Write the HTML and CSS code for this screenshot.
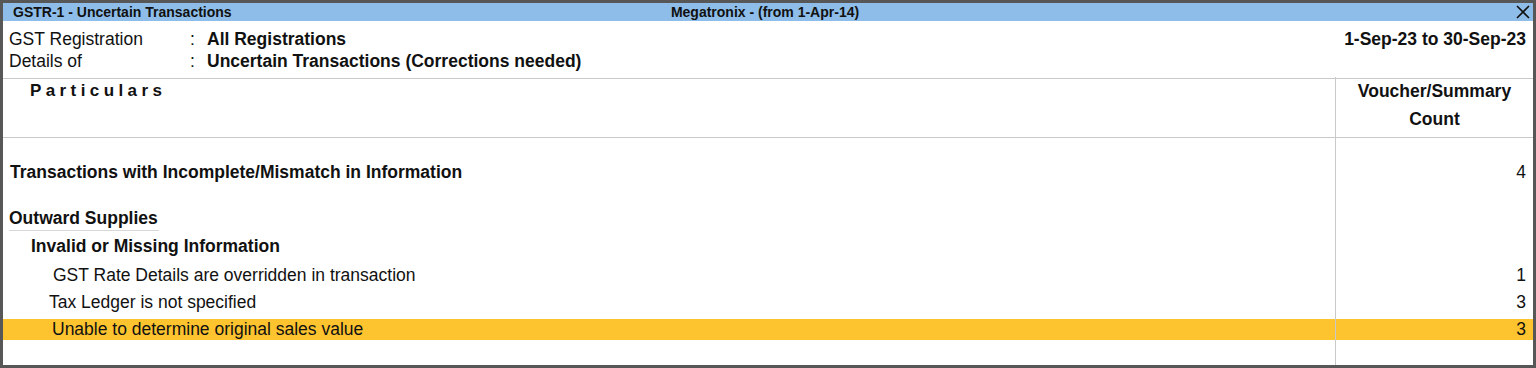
FILE: index.html
```html
<!DOCTYPE html>
<html lang="en">
<head>
  <meta charset="UTF-8">
  <title>GSTR-1 - Uncertain Transactions</title>
  <link rel="stylesheet" href="styles.css">
</head>
<body>

  <div class="window">
    <div class="titlebar">
      <span class="title-left">GSTR-1 - Uncertain Transactions</span>
      <span class="title-center">Megatronix - (from 1-Apr-14)</span>
      <span class="close">
        <svg width="14" height="14" viewBox="0 0 14 14"><path d="M1 1 L13 13 M13 1 L1 13" stroke="#111" stroke-width="1.6" fill="none"/></svg>
      </span>
    </div>

    <div class="info">
      <div class="info-rows">
        <div class="info-row">
          <span class="info-label">GST Registration</span>
          <span class="info-colon">:</span>
          <span class="info-value">All Registrations</span>
        </div>
        <div class="info-row">
          <span class="info-label">Details of</span>
          <span class="info-colon">:</span>
          <span class="info-value">Uncertain Transactions (Corrections needed)</span>
        </div>
      </div>
      <div class="period">1-Sep-23 to 30-Sep-23</div>
    </div>

    <div class="report">
      <div class="row colhead">
        <div class="cell-left"><span class="particulars">Particulars</span></div>
        <div class="cell-right">Voucher/Summary<br>Count</div>
      </div>

      <div class="row spacer"><div class="cell-left"></div><div class="cell-right"></div></div>

      <div class="row r-main">
        <div class="cell-left bold">Transactions with Incomplete/Mismatch in Information</div>
        <div class="cell-right">4</div>
      </div>

      <div class="row spacer"><div class="cell-left"></div><div class="cell-right"></div></div>

      <div class="row r-group">
        <div class="cell-left bold"><span class="underlined">Outward Supplies</span></div>
        <div class="cell-right"></div>
      </div>

      <div class="row r-sub">
        <div class="cell-left bold">Invalid or Missing Information</div>
        <div class="cell-right"></div>
      </div>

      <div class="row r-item1">
        <div class="cell-left">GST Rate Details are overridden in transaction</div>
        <div class="cell-right">1</div>
      </div>

      <div class="row r-item2">
        <div class="cell-left">Tax Ledger is not specified</div>
        <div class="cell-right">3</div>
      </div>

      <div class="row r-gap"><div class="cell-left"></div><div class="cell-right"></div></div>

      <div class="row r-item3 selected">
        <div class="cell-left">Unable to determine original sales value</div>
        <div class="cell-right">3</div>
      </div>

      <div class="row filler"><div class="cell-left"></div><div class="cell-right"></div></div>
    </div>
  </div>

</body>
</html>
```

FILE: styles.css
```css
html, body {
  margin: 0;
  padding: 0;
  height: 100%;
  background: #fff;
}
body {
  font-family: "Liberation Sans", Arial, sans-serif;
  color: #111;
}
.window {
  box-sizing: border-box;
  height: 368px;
  border: 3px solid #575757;
  display: flex;
  flex-direction: column;
}
.titlebar {
  position: relative;
  height: 18px;
  background: #8dbde8;
  display: flex;
  align-items: center;
  font-size: 14px;
  font-weight: bold;
}
.title-left {
  padding-left: 10px;
}
.title-center {
  position: absolute;
  left: 0;
  right: 0;
  text-align: center;
  transform: translateX(-3px);
}
.close {
  position: absolute;
  right: 3px;
  top: 2px;
  height: 14px;
}
.close svg {
  display: block;
}
.info {
  height: 58px;
  box-sizing: border-box;
  padding: 7px 7px 0 6px;
  display: flex;
  justify-content: space-between;
  border-bottom: 1px solid #c9c9c9;
  font-size: 17.5px;
}
.info-row {
  display: flex;
  height: 22px;
  line-height: 22px;
}
.info-label {
  width: 181px;
}
.info-colon {
  width: 17px;
}
.info-value {
  font-weight: bold;
}
.period {
  font-weight: bold;
  line-height: 22px;
}
.report {
  flex: 1;
  display: flex;
  flex-direction: column;
  font-size: 17.5px;
}
.row {
  display: flex;
}
.cell-left {
  flex: 1;
  white-space: nowrap;
}
.cell-right {
  width: 198px;
  border-left: 1px solid #c9c9c9;
  text-align: right;
  padding-right: 7px;
  box-sizing: border-box;
}
.bold {
  font-weight: bold;
}
.colhead {
  height: 58px;
  border-bottom: 1px solid #c9c9c9;
  font-weight: bold;
}
.colhead .cell-left {
  padding: 0 0 0 27px;
  line-height: 22px;
}
.particulars {
  font-size: 17px;
  letter-spacing: 4.4px;
}
.colhead .cell-right {
  text-align: center;
  padding: 0;
  line-height: 28px;
  margin-top: -2px;
}
.spacer {
  height: 20px;
}
.r-main {
  height: 26px;
  line-height: 28px;
}
.r-main .cell-left {
  padding-left: 7px;
}
.r-group {
  height: 27px;
  line-height: 28px;
}
.r-group .cell-left {
  padding-left: 6px;
}
.underlined {
  display: inline-block;
  line-height: 24px;
  padding-right: 1px;
  border-bottom: 1px solid #d8d8d8;
}
.r-sub {
  height: 29px;
  line-height: 30px;
}
.r-sub .cell-left {
  padding-left: 28px;
}
.r-item1 {
  height: 28px;
  line-height: 30px;
}
.r-item1 .cell-left {
  padding-left: 50px;
}
.r-item2 {
  height: 27px;
  line-height: 28px;
}
.r-item2 .cell-left {
  padding-left: 46px;
}
.r-gap {
  height: 4px;
}
.r-item3 {
  height: 21px;
  line-height: 21px;
}
.r-item3 .cell-left {
  padding-left: 49px;
}
.selected {
  background: #fec42f;
}
.filler {
  flex: 1;
}
```
